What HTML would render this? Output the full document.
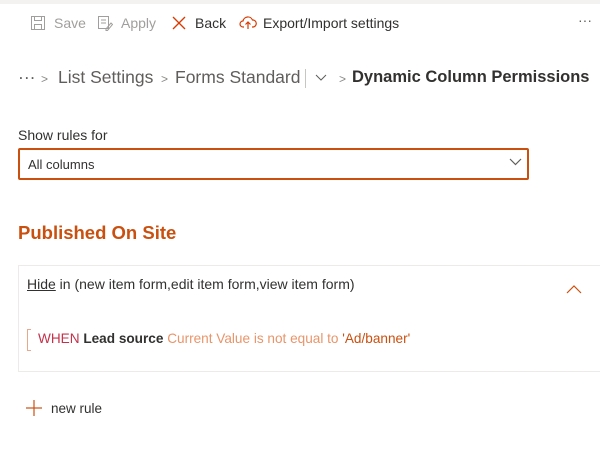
<!DOCTYPE html>
<html><head><style>
body{margin:0;width:600px;height:464px;background:#fff;font-family:"Liberation Sans",sans-serif;color:#323130;position:relative;overflow:hidden}
.a{position:absolute;white-space:nowrap}
.bc{top:67px;font-size:17.5px;color:#605e5c}
.ch{top:72px;font-size:12px;color:#8a8886}
</style></head><body>
<div class="a" style="left:0;top:0;width:600px;height:4px;background:#f3f2f1"></div>
<!-- toolbar -->
<svg class="a" style="left:30px;top:15px" width="16" height="16" viewBox="0 0 16 16" fill="none" stroke="#a19f9d" stroke-width="1"><rect x="1.5" y="1.5" width="13" height="13"/><rect x="4.5" y="1.5" width="7" height="4"/><rect x="4.5" y="9.5" width="7" height="5"/></svg>
<div class="a" style="left:54px;top:15px;font-size:14px;color:#a19f9d">Save</div>
<svg class="a" style="left:97px;top:15px" width="16" height="16" viewBox="0 0 16 16" fill="none" stroke="#a19f9d" stroke-width="1"><rect x="1.5" y="1.5" width="10" height="12"/><line x1="4" y1="5" x2="9" y2="5"/><line x1="4" y1="8" x2="9" y2="8"/><path d="M9 14l5-6 1.5 1.5-5 6H9z"/></svg>
<div class="a" style="left:121px;top:15px;font-size:14px;color:#a19f9d">Apply</div>
<svg class="a" style="left:172px;top:16px" width="14" height="14" viewBox="0 0 14 14" stroke="#d83b01" stroke-width="1.3"><line x1="1" y1="1" x2="13" y2="13"/><line x1="13" y1="1" x2="1" y2="13"/></svg>
<div class="a" style="left:195px;top:15px;font-size:14px;color:#323130">Back</div>
<svg class="a" style="left:239px;top:15px" width="18" height="16" viewBox="0 0 18 16" fill="none" stroke="#d83b01" stroke-width="1.2"><path d="M5 12H4a3 3 0 0 1 0-6 5 5 0 0 1 9.5-1A3.5 3.5 0 0 1 14 12h-1"/><path d="M9 14V7M6.5 9.5L9 7l2.5 2.5"/></svg>
<div class="a" style="left:263px;top:15px;font-size:14px;color:#323130">Export/Import settings</div>
<div class="a" style="left:578px;top:12px;font-size:14px;color:#605e5c">···</div>
<!-- breadcrumb -->
<div class="a bc" style="left:18px">···</div>
<div class="a ch" style="left:41px">&gt;</div>
<div class="a bc" style="left:58px">List Settings</div>
<div class="a ch" style="left:161px">&gt;</div>
<div class="a bc" style="left:175px">Forms Standard</div>
<div class="a" style="left:305px;top:69px;width:1px;height:19px;background:#c8c6c4"></div>
<svg class="a" style="left:315px;top:74px" width="12" height="8" viewBox="0 0 12 8" fill="none" stroke="#605e5c" stroke-width="1"><path d="M1 1l5 5 5-5"/></svg>
<div class="a ch" style="left:339px">&gt;</div>
<div class="a bc" style="left:352px;font-weight:bold;color:#323130;font-size:16.5px;top:68px">Dynamic Column Permissions</div>
<!-- select -->
<div class="a" style="left:18px;top:127px;font-size:14px;color:#323130">Show rules for</div>
<div class="a" style="left:18px;top:148px;width:507px;height:28px;border:2px solid #ca5010;border-radius:2px"></div>
<div class="a" style="left:28px;top:157px;font-size:13px;color:#323130">All columns</div>
<svg class="a" style="left:509px;top:158px" width="13" height="8" viewBox="0 0 13 8" fill="none" stroke="#605e5c" stroke-width="1.2"><path d="M1 1l5.5 5.5L12 1"/></svg>
<div class="a" style="left:18px;top:222px;font-size:18.5px;font-weight:bold;color:#ca5010">Published On Site</div>
<!-- card -->
<div class="a" style="left:18px;top:265px;width:600px;height:107px;border:1px solid #edebe9;box-sizing:border-box"></div>
<div class="a" style="left:27px;top:276px;font-size:14px;color:#323130"><u>Hide</u> in (new item form,edit item form,view item form)</div>
<svg class="a" style="left:566px;top:285px" width="16" height="9" viewBox="0 0 16 9" fill="none" stroke="#ca5010" stroke-width="1.2"><path d="M1 8l7-7 7 7"/></svg>
<div class="a" style="left:27px;top:329px;width:3px;height:20px;border:1px solid #e8a98a;border-right:none"></div>
<div class="a" style="left:38px;top:331px;font-size:13.6px;color:#c4314b">WHEN <b style="color:#323130">Lead source</b> <span style="color:#e8956a">Current Value is not equal to</span> <span style="color:#ca5010">'Ad/banner'</span></div>
<svg class="a" style="left:26px;top:400px" width="16" height="16" viewBox="0 0 16 16" stroke="#ca5010" stroke-width="1.2"><line x1="8" y1="0" x2="8" y2="16"/><line x1="0" y1="8" x2="16" y2="8"/></svg>
<div class="a" style="left:51px;top:401px;font-size:13.5px;color:#323130">new rule</div>
</body></html>
